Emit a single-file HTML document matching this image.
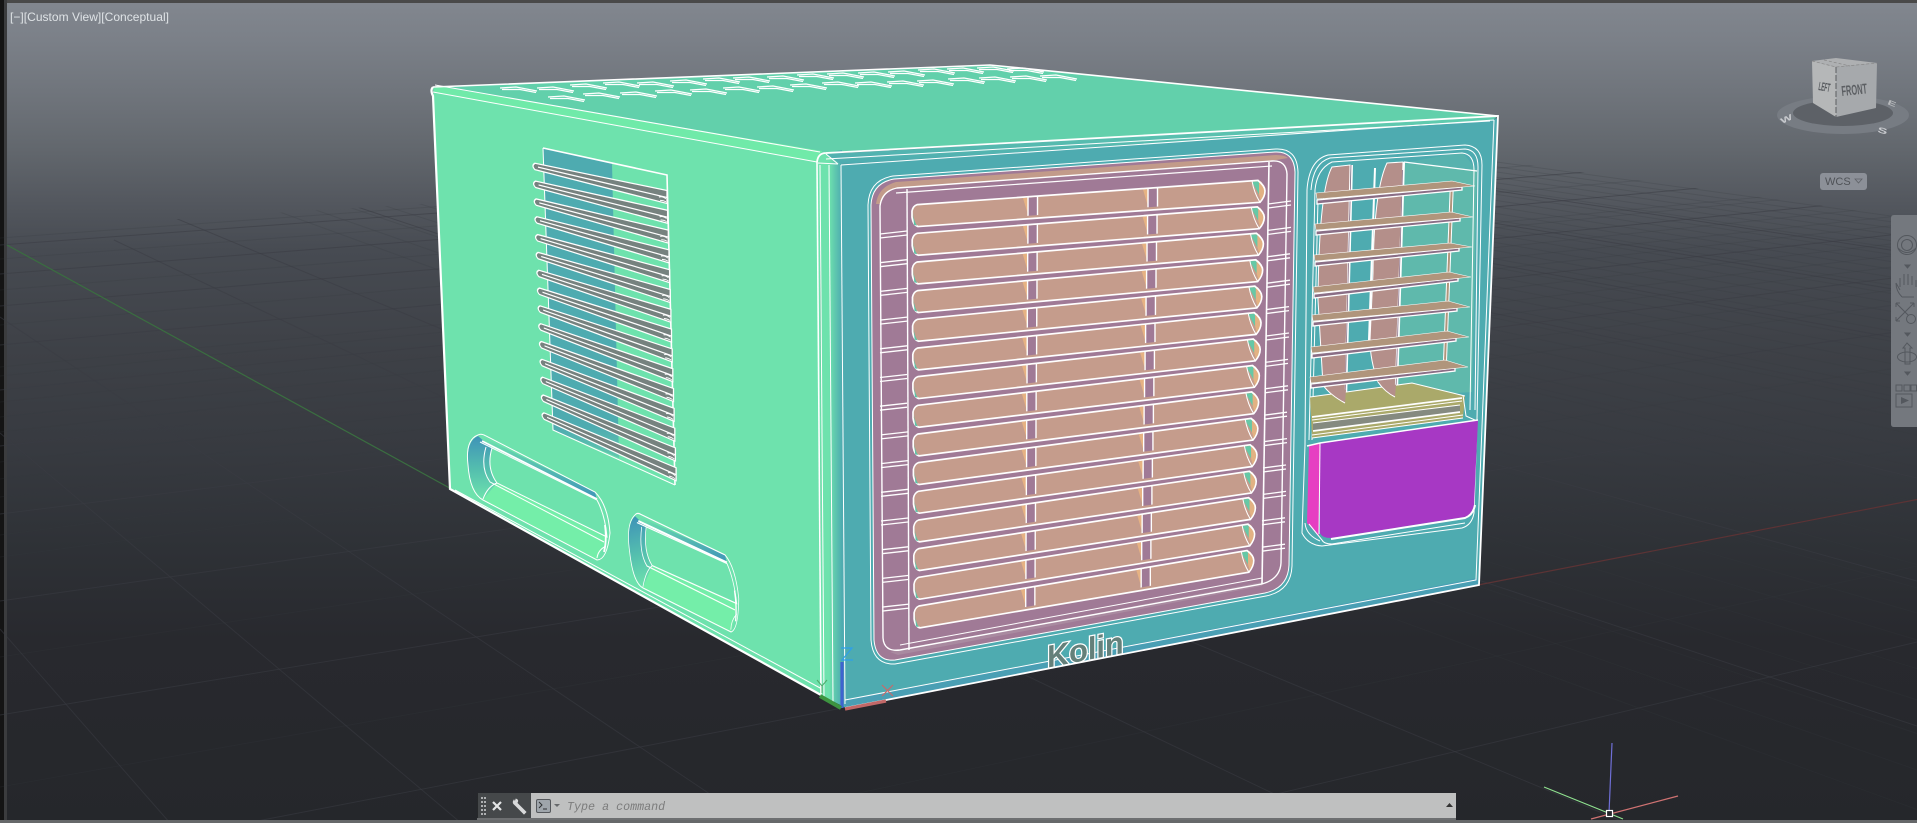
<!DOCTYPE html>
<html>
<head>
<meta charset="utf-8">
<title>Custom View</title>
<style>
html,body{margin:0;padding:0;width:1917px;height:823px;overflow:hidden;background:#26282d;}
#wrap{position:relative;width:1917px;height:823px;overflow:hidden;
background:linear-gradient(180deg,#82878f 0px,#7b8088 40px,#6e737a 100px,#62676d 150px,#54585f 200px,#474b52 250px,#3e4147 350px,#373a40 450px,#2e3136 550px,#28292e 640px,#25272b 823px);}
svg{position:absolute;left:0;top:0;display:block;}
</style>
</head>
<body>
<div id="wrap">
<svg width="1917" height="823" viewBox="0 0 1917 823" xmlns="http://www.w3.org/2000/svg">
<defs>
<clipPath id="gnd"><polygon points="0,230 437,203 1330,137 1917,219 1917,823 0,823"/></clipPath>
<linearGradient id="cornerG" x1="829" x2="842" y1="0" y2="0" gradientUnits="userSpaceOnUse"><stop offset="0" stop-color="#6ee2ad"/><stop offset="1" stop-color="#4eabb0"/></linearGradient>
<linearGradient id="topStrip" x1="0" y1="0" x2="0" y2="1"><stop offset="0" stop-color="#62cfae"/><stop offset="1" stop-color="#4eabb0"/></linearGradient>
<linearGradient id="hBlue" x1="0" y1="0" x2="0" y2="1"><stop offset="0" stop-color="#3f93b8"/><stop offset=".55" stop-color="#55c0ae"/><stop offset="1" stop-color="#6ee2ad"/></linearGradient>
<linearGradient id="hTop" x1="0" y1="0" x2="0" y2="1"><stop offset="0" stop-color="#6ee2ad"/><stop offset="1" stop-color="#3f93b8"/></linearGradient>
<linearGradient id="ventB" x1="0" y1="0" x2="0" y2="1"><stop offset="0" stop-color="#4eabb0"/><stop offset=".9" stop-color="#4eabb0"/><stop offset="1" stop-color="#62c8ae"/></linearGradient>

<path id="pill" d="M0,0 L16,-1 L37,3 M2,1.5 L20,1.5 L36,4.5" fill="none" stroke="#fff" stroke-width="1.3"/>

<g id="slat">
  <path d="M6,0 L346,0 Q353,6 353,11 Q353,17 348,22 L6,22 Q1,20 0,12 L0,6 Q1,1 6,0Z" fill="#c59c8c"/>
  <path d="M340,1 L347,1 L347,14 Z" fill="#66c8a6"/>
  <path d="M347,2 L349,1 Q353,7 352,12 Q352,18 349,21 L347,14 Z" fill="#e2b283"/>
  <path d="M340,0 Q342,12 348,22" fill="none" stroke="#fff" stroke-width="1"/>
  <path d="M5,0 L346,0 Q353,6 353,11 Q353,17 348,22 L6,22 Q1,20 0,12 L0,6 Q1,1 5,0Z" fill="none" stroke="#fff" stroke-width="1.7"/>
  <path d="M1,8 Q2,17 5,21 L2,20 Z" fill="#5cc4a8"/>
  <path d="M111,1 L116,1 L116,18 Z" fill="#e6b283"/>
  <rect x="116" y="1" width="9" height="18" fill="#a07a96"/>
  <path d="M116,0V19M125.5,0V19" stroke="#fff" stroke-width="1.4"/>
  <path d="M231,1 L236,1 L236,18 Z" fill="#e6b283"/>
  <rect x="236" y="1" width="9" height="18" fill="#a07a96"/>
  <path d="M236,0V19M245.5,0V19" stroke="#fff" stroke-width="1.4"/>
</g>
<g id="louver">
  <path d="M2,-3.2 L134,-6.5 L134,6.5 L2,3.2 Q-2,0 2,-3.2Z" fill="#76827f" stroke="#fff" stroke-width="1.3"/>
  <path d="M5,0 L134,0.5" stroke="#fff" stroke-width="1.3"/>
  <path d="M126,2 q3,-2 7,0 M127,5 q3,-1 6,0" stroke="#fff" stroke-width="1" fill="none"/>
</g>
<path id="tickL" d="M880,1 L907,-2 M880,5 L907,2" stroke="#fff" stroke-width="1.3" fill="none"/>
<path id="tickR" d="M1268,1 L1291,-2 M1268,5 L1291,2" stroke="#fff" stroke-width="1.3" fill="none"/>
<g id="handle">
  <path d="M478,435 Q465,440 468,465 Q470,493 483,500 L597,560 Q607,560 610,533 Q608,505 595,492 L486,436 Q481,433 478,435Z" fill="#6ee2ad"/>
  <path d="M478,436 L492,448 Q486,470 497,483 L483,499 Q470,490 468,465 Q466,441 478,436Z" fill="url(#hBlue)"/>
  <polygon points="482,437 595,492 597,500 492,448" fill="url(#hTop)"/>
  <polygon points="497,483 607,537 597,560 483,500" fill="#74eea9"/>
  <path d="M478,435 Q465,440 468,465 Q470,493 483,500 L597,560 Q607,560 610,533 Q608,505 595,492 L486,436 Q481,433 478,435Z" fill="none" stroke="#fff" stroke-width="1"/>
  <path d="M480,442 L597,500 Q605,515 607,537 L497,483 Q486,468 492,448 M486,447 Q480,468 490,482 L604,542 M483,499 Q488,486 497,483 M597,558 Q598,550 606,546" fill="none" stroke="#fff" stroke-width="1"/>
  <path d="M482,441 L597,499 M605,525 Q607,540 604,552" fill="none" stroke="#fff" stroke-width="1.8"/>
</g>
</defs>

<!-- window chrome -->
<rect x="0" y="0" width="1917" height="3" fill="#494949"/>
<rect x="0" y="0" width="4" height="823" fill="#141414"/>
<rect x="4" y="0" width="3" height="823" fill="#3b3c3e"/>

<!-- ground grid -->
<g clip-path="url(#gnd)" fill="none">
 <g stroke="#383a40" stroke-opacity=".22" stroke-width="1">
  <path d="M719,823L1917,566M0,787L1917,447M0,657L1917,365M0,557L1917,302M0,479L1917,253M0,417L1917,214M0,367L1917,182M0,325L1917,156M0,290L1917,134M0,259L1917,114M0,238L1917,100M0,376L1917,186M0,402L1917,204M0,432L1917,223M0,462L1917,241M0,497L1917,264M0,535L1917,287"/>
  <path d="M1263,130L1917,219.5M1232,130L1917,225.4M1200,130L1917,231.6M1168,130L1917,237.9M1136,130L1917,244.5M1104,130L1917,251.3M1073,130L1917,258.3M1041,130L1917,265.6M1009,130L1917,273.2M977,130L1917,281.1M945,130L1917,289.3M914,130L1917,297.8M882,130L1917,306.6M850,130L1917,315.9M818,130L1917,325.5M787,130L1917,335.5M755,130L1917,346M723,130L1917,357M691,130L1917,368.5M659,130L1917,380.5M627,130L1917,393.2M596,130L1917,406.4M564,130L1917,420.4M532,130L1917,435M500,130L1917,450.5M468,130L1917,466.9M437,130L1917,484.1M405,130L1917,502.4M373,130L1917,521.9M341,130L1917,542.5M309,130L1917,564.5M278,130L1917,587.9M246,130L1917,613M214,130L1917,639.9M182,130L1917,668.7M150,130L1917,699.9M119,130L1917,733.5M87,130L1917,770M55,130L1917,809.5"/>
 </g>
 <g stroke="#3a3c43" stroke-opacity=".55" stroke-width="1">
  <path d="M1154,823L1917,642M247,823L842,708M0,715L1917,401M0,601L1917,329M0,514L1917,275M0,446L1917,232M0,390L1917,196M0,345L1917,168M0,306L1917,144M0,274L1917,123M0,245L1917,105"/>
  <path d="M132,200L1626,823M126,130L1917,726M287,130L1917,581M448,130L1917,478M609,130L1917,401M770,130L1917,342M931,130L1917,293M1092,130L1917,254M114,240L1335,823M0,317L753,823M0,433L461,823M0,629L170,823"/>
 </g>
 <path d="M7,245L455,491" stroke="#3a6e40" stroke-width="1.2"/>
 <path d="M1478,585L1917,499.5" stroke="#5c3335" stroke-width="1.2"/>
</g>

<!-- BOX: top face -->
<polygon points="433,87 990,65 1498,116 820,153" fill="#62d0ab"/>
<!-- roof vents -->
<use href="#pill" x="500" y="88"/><use href="#pill" x="537" y="88"/><use href="#pill" x="570" y="85"/><use href="#pill" x="603" y="83"/><use href="#pill" x="637" y="83"/><use href="#pill" x="670" y="81"/><use href="#pill" x="703" y="79"/><use href="#pill" x="733" y="78"/><use href="#pill" x="767" y="77"/><use href="#pill" x="797" y="75"/><use href="#pill" x="827" y="74"/><use href="#pill" x="858" y="73"/><use href="#pill" x="888" y="72"/><use href="#pill" x="918" y="70"/><use href="#pill" x="947" y="69"/><use href="#pill" x="977" y="68"/><use href="#pill" x="1007" y="69"/>
<use href="#pill" x="548" y="97"/><use href="#pill" x="583" y="94"/><use href="#pill" x="620" y="93"/><use href="#pill" x="655" y="91"/><use href="#pill" x="690" y="90"/><use href="#pill" x="723" y="88"/><use href="#pill" x="757" y="87"/><use href="#pill" x="790" y="85"/><use href="#pill" x="822" y="83"/><use href="#pill" x="855" y="83"/><use href="#pill" x="887" y="82"/><use href="#pill" x="917" y="81"/><use href="#pill" x="948" y="79"/><use href="#pill" x="979" y="78"/><use href="#pill" x="1010" y="77"/><use href="#pill" x="1040" y="76"/>
<!-- left face -->
<polygon points="433,87 820,153 821,695 450,489" fill="#6ee2ad"/>
<polygon points="436,86 822,151 818,162 434,92" fill="#70eaa9"/>
<!-- corner & front face -->
<polygon points="820,153 842,150 846,708 821,695" fill="url(#cornerG)"/>
<polygon points="826,154 1498,116 1490,122 841,164" fill="url(#topStrip)"/>
<polygon points="841,164 1490,120 1498,118 1479,585 845,708" fill="#4eabb0"/>
<polygon points="845,700 1477,578 1479,585 845,708" fill="#4a9fb4"/>

<!-- box outlines -->
<g fill="none" stroke="#fff">
 <path d="M433,87 L990,65 L1498,116" stroke-width="1.6"/>
 <path d="M433,87 Q430,90 433,96 L450,489 L821,695" stroke-width="2.2"/>
 <path d="M455,490 L822,689" stroke-width="1"/>
 <path d="M435,85 L820,152" stroke-width="1.1"/>
 <path d="M433,92 L817,162" stroke-width="1"/>
 <path d="M817,162 Q818,153 826,153 L1498,116 L1479,585 L845,708" stroke-width="1.8"/>
 <path d="M826,154 L838,164" stroke-width="1"/>
 <path d="M826,159 L1490,121" stroke-width="1"/>
 <path d="M841,165 L1494,120" stroke-width="1"/>
 <path d="M1494,120 L1476,580 L845,700" stroke-width="1"/>
 <path d="M817,162 L821,695" stroke-width="1.6"/>
 <path d="M820,165 L824,697" stroke-width="1"/>
 <path d="M829,165 L833,702" stroke-width="1"/>
 <path d="M841,165 L845,704" stroke-width="1"/>
 <path d="M818,163 L838,164" stroke-width="1"/>
</g>

<!-- Left-side vent -->
<polygon points="543,148 667,175 675,485 553,430" fill="#6ee2ad"/>
<polygon points="543,148 612,163 619,458 553,430" fill="url(#ventB)"/>
<path d="M543,148 L667,175 L675,485" fill="none" stroke="#fff" stroke-width="1.6"/>
<path d="M543,148 L553,430 L675,485" fill="none" stroke="#fff" stroke-width="1"/>
<use href="#louver" transform="matrix(1,.2313,0,1,533,166)"/>
<use href="#louver" transform="matrix(1,.2463,0,1,533.6,183.8)"/>
<use href="#louver" transform="matrix(1,.2612,0,1,534.3,201.6)"/>
<use href="#louver" transform="matrix(1,.2761,0,1,535,219.4)"/>
<use href="#louver" transform="matrix(1,.2910,0,1,535.6,237.2)"/>
<use href="#louver" transform="matrix(1,.3060,0,1,536.2,255)"/>
<use href="#louver" transform="matrix(1,.3209,0,1,536.9,272.8)"/>
<use href="#louver" transform="matrix(1,.3358,0,1,537.5,290.6)"/>
<use href="#louver" transform="matrix(1,.3507,0,1,538.2,308.4)"/>
<use href="#louver" transform="matrix(1,.3657,0,1,538.8,326.2)"/>
<use href="#louver" transform="matrix(1,.3806,0,1,539.5,344)"/>
<use href="#louver" transform="matrix(1,.3955,0,1,540.1,361.8)"/>
<use href="#louver" transform="matrix(1,.4104,0,1,540.8,379.6)"/>
<use href="#louver" transform="matrix(1,.4254,0,1,541.4,397.4)"/>
<use href="#louver" transform="matrix(1,.4403,0,1,542.1,415.2)"/>

<!-- Handles -->
<use href="#handle"/>
<use href="#handle" transform="matrix(.737,-.214,.0664,1.1395,253.8,121.6)"/>

<!-- Main grille -->
<path d="M871,205 Q872,183 894,179 L1275,152 Q1294,151 1295,172 L1289,565 Q1288,588 1265,593 L895,660 Q876,662 874,640 Z" fill="#a07a96"/>
<path d="M876,204 Q878,187 896,182 L1276,155 Q1285,155 1288,158 L1276,160 L896,188 Q884,192 880,204Z" fill="#c29b8a"/>
<path d="M1262,586 L898,655 L890,652 L1262,582Z" fill="#a98aa0"/>
<g fill="none" stroke="#fff">
 <path d="M871,205 Q872,183 894,179 L1275,152 Q1294,151 1295,172 L1289,565 Q1288,588 1265,593 L895,660 Q876,662 874,640 Z" stroke-width="1"/>
 <path d="M868,205 Q869,180 893,176 L1276,149 Q1297,148 1298,172 L1292,566 Q1291,591 1266,596 L895,664 Q873,665 871,640 Z" stroke-width="1"/>
 <path d="M880,206 Q882,191 897,188 L1272,161 Q1286,160 1287,174 L1281,563 Q1280,579 1262,584 L900,650 Q884,652 883,638 Z" stroke-width="1.4"/>
 <path d="M907,189 L909,650" stroke-width="1.4"/>
 <path d="M1269,162 L1262,584" stroke-width="1.6"/>
 <path d="M896,193 L1272,166" stroke-width="1.2"/>
 <path d="M900,645 L1262,578" stroke-width="1"/>
</g>
<use href="#tickL" transform="translate(0,233)"/>
<use href="#tickL" transform="translate(0,261.7)"/>
<use href="#tickL" transform="translate(0,290.4)"/>
<use href="#tickL" transform="translate(0,319.1)"/>
<use href="#tickL" transform="translate(0,347.8)"/>
<use href="#tickL" transform="translate(0,376.5)"/>
<use href="#tickL" transform="translate(0,405.2)"/>
<use href="#tickL" transform="translate(1,433.9)"/>
<use href="#tickL" transform="translate(1,462.6)"/>
<use href="#tickL" transform="translate(1,491.3)"/>
<use href="#tickL" transform="translate(1,520)"/>
<use href="#tickL" transform="translate(2,548.7)"/>
<use href="#tickL" transform="translate(2,577.4)"/>
<use href="#tickL" transform="translate(2,606.1)"/>
<use href="#tickR" transform="translate(0,203)"/>
<use href="#tickR" transform="translate(0,229.4)"/>
<use href="#tickR" transform="translate(-1,255.8)"/>
<use href="#tickR" transform="translate(-1,282.2)"/>
<use href="#tickR" transform="translate(-2,308.6)"/>
<use href="#tickR" transform="translate(-2,335)"/>
<use href="#tickR" transform="translate(-3,361.4)"/>
<use href="#tickR" transform="translate(-3,387.8)"/>
<use href="#tickR" transform="translate(-4,414.2)"/>
<use href="#tickR" transform="translate(-4,440.6)"/>
<use href="#tickR" transform="translate(-5,467)"/>
<use href="#tickR" transform="translate(-5,493.4)"/>
<use href="#tickR" transform="translate(-6,519.8)"/>
<use href="#tickR" transform="translate(-6,546.2)"/>

<use href="#slat" transform="matrix(1,-.0710,0,1,912,205)"/>
<use href="#slat" transform="matrix(.9973,-.0776,0,1,912.2,233.7)"/>
<use href="#slat" transform="matrix(.9946,-.0841,0,1,912.3,262.4)"/>
<use href="#slat" transform="matrix(.9919,-.0906,0,1,912.5,291.1)"/>
<use href="#slat" transform="matrix(.9892,-.0972,0,1,912.6,319.8)"/>
<use href="#slat" transform="matrix(.9865,-.1037,0,1,912.8,348.5)"/>
<use href="#slat" transform="matrix(.9838,-.1102,0,1,912.9,377.2)"/>
<use href="#slat" transform="matrix(.9811,-.1168,0,1,913,405.9)"/>
<use href="#slat" transform="matrix(.9784,-.1233,0,1,913.2,434.6)"/>
<use href="#slat" transform="matrix(.9757,-.1298,0,1,913.4,463.3)"/>
<use href="#slat" transform="matrix(.9730,-.1364,0,1,913.5,492)"/>
<use href="#slat" transform="matrix(.9703,-.1429,0,1,913.7,520.7)"/>
<use href="#slat" transform="matrix(.9676,-.1494,0,1,913.8,549.4)"/>
<use href="#slat" transform="matrix(.9649,-.1560,0,1,914,578.1)"/>
<use href="#slat" transform="matrix(.9622,-.1625,0,1,914.1,606.8)"/>

<!-- Right section -->
<path d="M1307,190 Q1309,160 1328,155 L1465,145 Q1482,146 1482,165 L1477,420 L1474,513 Q1472,525 1462,528 L1322,546 Q1308,545 1302,533 L1305,445 Z" fill="#4eabb0"/>
<polygon points="1404,163 1477,170 1472,392 1396,397" fill="#5fb9ac"/>
<polygon points="1404,163 1462,152 1477,170" fill="#57b2ae"/>
<g fill="none" stroke="#fff" stroke-width="1">
 <path d="M1307,190 Q1309,160 1328,155 L1465,145 Q1482,146 1482,165 L1477,420 L1474,513 Q1472,525 1462,528 L1322,546 Q1308,545 1302,533 L1305,445 Z"/>
 <path d="M1311,190 Q1313,163 1330,158 L1465,149 Q1478,150 1478,167 L1475,410"/>
 <path d="M1315,190 Q1317,169 1332,162 L1462,153 Q1474,154 1474,170 L1470,410"/>
 <path d="M1315,190 L1309,440 M1318,200 L1312,440"/>
 <path d="M1404,162 L1477,171" stroke-width="1.2"/>
</g>
<path d="M1332,167 L1350,165 L1345,403 Q1330,395 1323,385 L1318,300 Q1319,190 1332,167Z" fill="#b48f8a" stroke="#fff" stroke-width="1"/>
<path d="M1387,163 L1403,162 L1395,397 Q1385,392 1378,382 Q1370,360 1370,340 L1373,273 Q1374,190 1387,163Z" fill="#b48f8a" stroke="#fff" stroke-width="1"/>
<path d="M1352,165 L1346,403 M1375,168 L1369,340 M1404,162 L1397,392" stroke="#fff" stroke-width="2" fill="none"/>
<path d="M1351,165 L1345,400 M1402.5,170 L1396,390" stroke="#8a6e86" stroke-width=".8" fill="none"/>
<path d="M1452,181 L1445,361" stroke="#fff" stroke-width="4" fill="none"/>
<path d="M1452,181 L1445,361" stroke="#b0957c" stroke-width="2" fill="none"/>
<!-- olive -->
<polygon points="1310,397 1412,383 1465,396 1463,418 1312,438" fill="#aaa96a"/>
<path d="M1310,397 L1412,383 L1465,396" stroke="#fff" stroke-width="1" fill="none"/>
<!-- fan tips over olive -->
<path d="M1323,385 Q1330,395 1345,403 L1346,390 L1323,380Z" fill="#b48f8a"/>
<path d="M1378,382 Q1385,392 1395,397 L1396,385 L1376,375Z" fill="#b48f8a"/>
<path d="M1323,385 Q1330,395 1345,403 M1378,382 Q1385,392 1395,397" stroke="#fff" stroke-width="1" fill="none"/>
<!-- shelves -->
<g fill="#8a6e86" stroke="#fff" stroke-width="1.3">
 <polygon points="1317,200 1462,187 1462,190 1317,204"/>
 <polygon points="1316,231 1460,218 1460,221 1316,235"/>
 <polygon points="1315,262 1459,248 1459,251 1315,266"/>
 <polygon points="1314,294 1458,278 1458,281 1314,298"/>
 <polygon points="1313,322 1457,308 1457,311 1313,326"/>
 <polygon points="1312,354 1456,338 1456,341 1312,358"/>
 <polygon points="1311,384 1455,368 1455,371 1311,388"/>
</g>
<g fill="#b0957c" stroke="#fff" stroke-width=".6">
 <polygon points="1316,193 1452,181 1475,186 1317,199"/>
 <polygon points="1315,224 1451,212 1473,217 1316,230"/>
 <polygon points="1314,255 1450,243 1472,247 1315,261"/>
 <polygon points="1313,287 1449,272 1471,277 1314,293"/>
 <polygon points="1312,315 1448,301 1470,307 1313,321"/>
 <polygon points="1311,347 1447,331 1469,337 1312,353"/>
 <polygon points="1310,377 1445,360 1468,367 1311,383"/>
</g>
<!-- gray louvre strip -->
<polygon points="1313,423 1460,405 1460,412 1313,431" fill="#858a80"/>
<g stroke="#fff" fill="none">
 <path d="M1312,417 L1462,398" stroke-width="1.7"/>
 <path d="M1312,420 L1462,401" stroke-width="1"/>
 <path d="M1313,423 L1460,405" stroke-width="1"/>
 <path d="M1313,431 L1460,412" stroke-width="1.7"/>
 <path d="M1312,435 L1463,415" stroke-width="1"/>
 <path d="M1312,438 L1463,418" stroke-width="1"/>
 <path d="M1463,395 L1466,416 L1477,421" stroke-width="1"/>
</g>
<!-- magenta/purple -->
<polygon points="1309,445 1320,443 1319,537 1307,523" fill="#e63fc2"/>
<path d="M1320,443 L1478,420 L1474,505 Q1472,515 1465,517 L1331,538 Q1322,538 1320,533 Z" fill="#a738c4"/>
<g fill="none" stroke="#fff">
 <path d="M1307,446 L1320,443 L1478,420" stroke-width="1.5"/>
 <path d="M1320,443 L1319,534" stroke-width="1"/>
 <path d="M1331,539 L1465,518 Q1473,515 1475,505" stroke-width="2"/>
 <path d="M1309,524 L1322,540 Q1324,544 1332,544 L1465,523" stroke-width="1"/>
 <path d="M1305,523 Q1306,535 1320,541" stroke-width="1"/>
</g>

<!-- Kolin -->
<text x="1046" y="660" transform="rotate(-11 1086 650)" font-family="'Liberation Sans',sans-serif" font-weight="700" font-style="italic" font-size="31" textLength="78" lengthAdjust="spacingAndGlyphs" fill="#64807a" stroke="#fff" stroke-width="2.4" paint-order="stroke">Kolin</text>

<!-- UCS icon -->
<path d="M842,662 L842,708" stroke="#3f63cf" stroke-width="3.2"/>
<path d="M820,696 L841,708" stroke="#3d9440" stroke-width="4"/>
<path d="M845,709 L886,701" stroke="#c26868" stroke-width="3.4"/>
<path d="M841,648 H852 L842,660 H853" fill="none" stroke="#2f9fe8" stroke-width="1.2"/>
<path d="M817,680 L822,686 L827,680 M822,686 V693" fill="none" stroke="#4fa86a" stroke-width="1"/>
<path d="M882,685 L893,696 M893,685 L882,696" fill="none" stroke="#c86a6a" stroke-width="1.2"/>

<!-- Top-left label -->
<text x="10" y="21" font-family="'Liberation Sans',sans-serif" font-size="12" fill="#dfe3e6" textLength="159" lengthAdjust="spacing">[−][Custom View][Conceptual]</text>

<!-- ViewCube -->
<ellipse cx="1843" cy="115" rx="66" ry="19" fill="#777c83"/>
<ellipse cx="1843" cy="113" rx="50" ry="13" fill="#5d6167"/>
<polygon points="1812,61 1836,58 1877,63 1836,67" fill="#aeb0b2"/>
<polygon points="1812,61 1836,67 1836,117 1813,103" fill="#b5b7b8"/>
<polygon points="1836,67 1877,63 1876,108 1836,117" fill="#a6a9ac"/>
<path d="M1836,67 V117" stroke="#5a5d61" stroke-width="1" stroke-dasharray="6 2"/>
<path d="M1812,61 L1836,67 L1877,63 M1824,60 L1850,66" stroke="#888" stroke-width=".7" fill="none" stroke-dasharray="3 2"/>
<text x="0" y="0" transform="translate(1818,90) rotate(10) scale(.42,1.1)" font-family="'Liberation Sans',sans-serif" font-weight="700" font-size="11" fill="#55585c">LEFT</text>
<text x="0" y="0" transform="translate(1842,96) rotate(-6) scale(.62,1.2)" font-family="'Liberation Sans',sans-serif" font-weight="700" font-size="12" fill="#5c5f63">FRONT</text>
<text x="0" y="0" transform="translate(1782,124) rotate(-25) scale(1.3,.8)" font-family="'Liberation Sans',sans-serif" font-weight="700" font-size="10" fill="#c8cace">W</text>
<text x="0" y="0" transform="translate(1877,132) rotate(15) scale(1.5,.8)" font-family="'Liberation Sans',sans-serif" font-weight="700" font-size="10" fill="#c8cace">S</text>
<text x="0" y="0" transform="translate(1887,104) rotate(22) scale(1.3,.7)" font-family="'Liberation Sans',sans-serif" font-weight="700" font-size="10" fill="#b8babd">E</text>

<!-- WCS -->
<rect x="1820" y="173" width="47" height="17" rx="3" fill="#8c9098"/>
<text x="1825" y="185" font-family="'Liberation Sans',sans-serif" font-size="11" fill="#4f5257">WCS</text>
<path d="M1855,179 h7 l-3.5,4 z" fill="none" stroke="#5f6268" stroke-width=".8"/>

<!-- Nav bar -->
<path d="M1917,215 H1894 Q1891,215 1891,218 V424 Q1891,427 1894,427 H1917 Z" fill="#74787e"/>
<g fill="none" stroke="#54585e" stroke-width="1">
 <circle cx="1907" cy="245" r="9.5"/><circle cx="1907" cy="245" r="5.5"/>
 <path d="M1898,248 Q1907,257 1916,248"/>
 <path d="M1905,265 h5 l-2.5,3 z" fill="#54585e"/>
 <path d="M1902,297 Q1896,291 1896,283 M1902,297 H1914 M1900,287 V278 M1904,285 V274 M1908,285 V274 M1912,285 V276 M1916,287 V280 M1896,283 L1900,290"/>
 <path d="M1896,303 L1914,321 M1914,303 L1896,321 M1896,303 h4 M1896,303 v4 M1914,303 h-4 M1914,303 v4 M1896,321 h4 M1896,321 v-4"/>
 <circle cx="1911" cy="319" r="4.5" fill="#74787e"/>
 <path d="M1905,333 h5 l-2.5,3 z" fill="#54585e"/>
 <path d="M1907,343 L1903,348 H1905 V364 H1910 V348 H1912 Z"/>
 <ellipse cx="1907" cy="357" rx="9.5" ry="5"/>
 <path d="M1905,372 h5 l-2.5,3 z" fill="#54585e"/>
 <rect x="1896" y="385" width="6" height="6"/><rect x="1904" y="385" width="6" height="6"/><rect x="1911" y="385" width="5.5" height="6"/>
 <rect x="1896" y="394" width="16" height="13"/>
</g>
<path d="M1901,397 L1909,400.5 L1901,404 Z" fill="#54585e"/>

<!-- Command line -->
<rect x="477" y="793" width="54" height="26" fill="#45484a"/>
<rect x="477" y="793" width="1" height="26" fill="#26282a"/>
<rect x="531" y="793" width="925" height="26" fill="#bfc0c0"/>
<rect x="477" y="818" width="979" height="2" fill="#6d6f71"/>
<g fill="#aeb0b2">
 <rect x="481" y="797" width="2" height="2"/><rect x="484" y="797" width="2" height="2"/>
 <rect x="481" y="801" width="2" height="2"/><rect x="484" y="801" width="2" height="2"/>
 <rect x="481" y="805" width="2" height="2"/><rect x="484" y="805" width="2" height="2"/>
 <rect x="481" y="809" width="2" height="2"/><rect x="484" y="809" width="2" height="2"/>
 <rect x="481" y="813" width="2" height="2"/><rect x="484" y="813" width="2" height="2"/>
</g>
<path d="M493,802 L501,810 M501,802 L493,810" stroke="#e4e5e6" stroke-width="2.2"/>
<path d="M514,800 Q512,803 515,805 L524,814 L526,812 L517,803 Q519,800 516,799 L515,802 Z" fill="#d8d9da" stroke="#d8d9da" stroke-width=".8"/>
<rect x="536.5" y="799.5" width="14" height="13" rx="1.5" fill="#9fa5ab" stroke="#55585c"/>
<path d="M539,802 L542,805 L539,808 M543,809 H547" fill="none" stroke="#2f3134" stroke-width="1"/>
<path d="M554,804 h6 l-3,3 z" fill="#66686b"/>
<text x="567" y="810" font-family="'Liberation Mono',monospace" font-style="italic" font-size="11.7" fill="#7c7c7c">Type a command</text>
<path d="M1446,807 h7 l-3.5,-4 z" fill="#333"/>

<!-- World axis icon -->
<path d="M1612,743 L1611,766 L1610,790 L1609,813" stroke="#6f6fd6" stroke-width="1.2" fill="none"/>
<path d="M1544,787 L1623,819" stroke="#8fe08f" stroke-width="1.2"/>
<path d="M1591,819 L1678,796" stroke="#cf7272" stroke-width="1.2"/>
<rect x="1606.5" y="810.5" width="6" height="6" fill="#26282d" stroke="#fff" stroke-width="1.2"/>

<!-- bottom edge -->
<rect x="0" y="820" width="1917" height="3" fill="#66686a"/>
</svg>
</div>
</body>
</html>
